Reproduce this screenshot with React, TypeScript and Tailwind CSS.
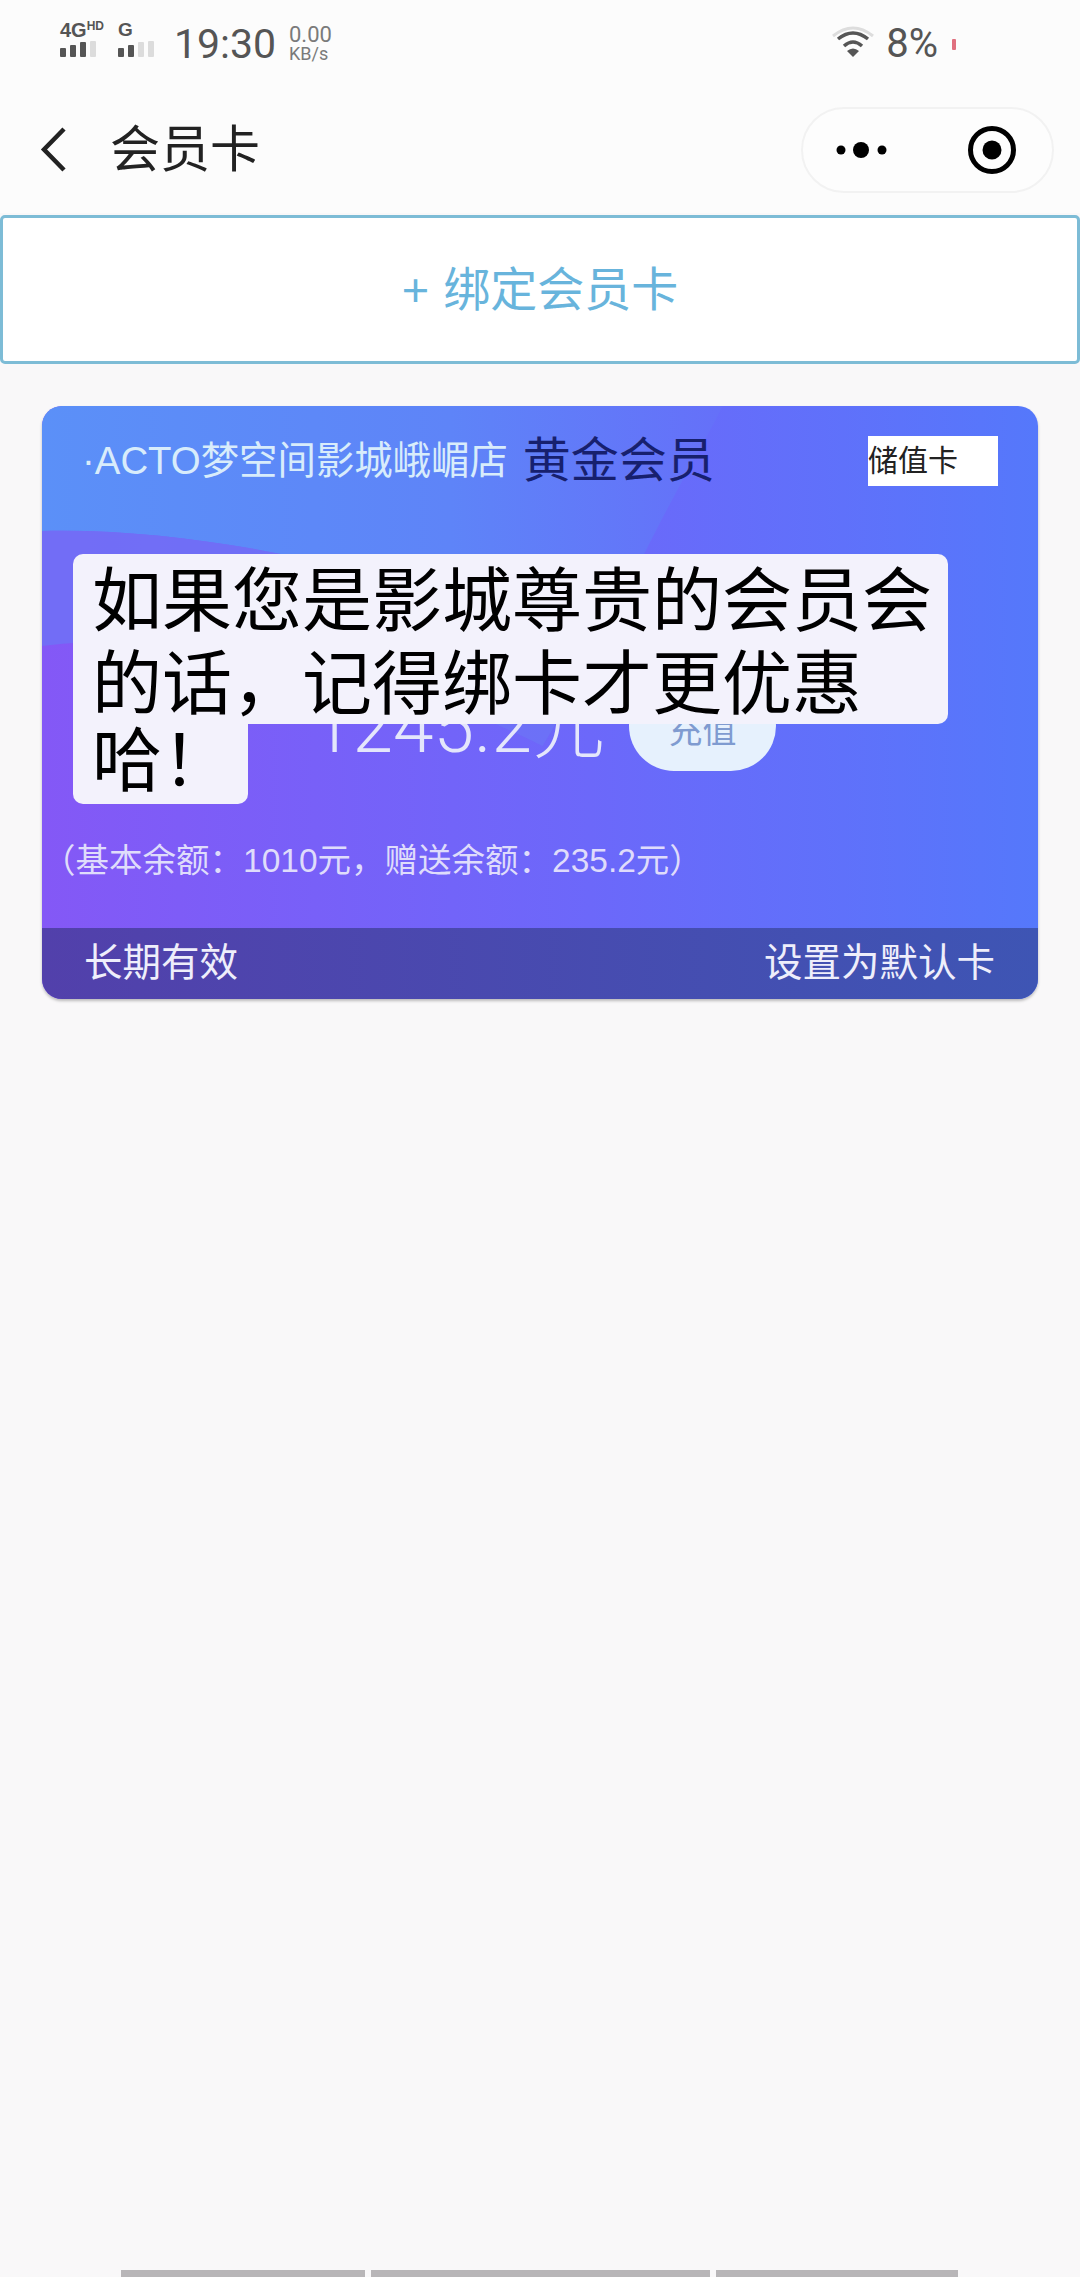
import React from "react";

const cjk = "font-['Liberation_Sans','Noto_Sans_CJK_SC',sans-serif]";

function Signal({ on }: { on: number }) {
  return (
    <div className="flex items-end gap-[4px] h-[16px]">
      {[9, 12, 15, 16].map((h, i) => (
        <div
          key={h}
          className={i < on ? "w-[6px] rounded-[1px] bg-[#555555]" : "w-[6px] rounded-[1px] bg-[#dcdcdc]"}
          style={{ height: h }}
        />
      ))}
    </div>
  );
}

function StatusBar() {
  return (
    <div className="h-[88px] pl-[60px] pr-[124px] flex items-center justify-between text-[#555555]">
      <div className="flex items-center">
        <div className="flex flex-col w-[58px] mt-[-12px]">
          <div className="flex items-start h-[22px] font-['Liberation_Sans',sans-serif] font-bold leading-none">
            <span className="text-[20px] leading-[22px]">4G</span>
            <span className="text-[12px] leading-[14px]">HD</span>
          </div>
          <Signal on={3} />
        </div>
        <div className="flex flex-col w-[56px] mt-[-12px]">
          <div className="h-[22px] font-['Liberation_Sans',sans-serif] font-bold text-[19px] leading-[22px]">G</div>
          <Signal on={2} />
        </div>
        <span className="font-['Roboto',sans-serif] text-[41px] leading-none w-[115px]">19:30</span>
        <div className="flex flex-col items-start font-['Roboto',sans-serif] text-[#7a7a7a] mt-[-2px]">
          <span className="text-[22px] leading-[21px]">0.00</span>
          <span className="text-[18px] leading-[17px]">KB/s</span>
        </div>
      </div>
      <div className="flex items-center">
        <svg width="44" height="36" viewBox="0 0 44 36" fill="none" className="mr-[11px]">
          <path d="M2 10 Q22 -6 42 10" stroke="#dddddd" strokeWidth="3" />
          <path d="M7 13 Q22 1 37 13" stroke="#555555" strokeWidth="3.5" />
          <path d="M13 20 Q22 12 31 20" stroke="#555555" strokeWidth="3.5" />
          <path d="M16 25 Q22 20 28 25 L22 31 Z" fill="#555555" />
        </svg>
        <span className="font-['Roboto',sans-serif] text-[40px] leading-none">8%</span>
        <span className="ml-[14px] w-[4px] h-[11px] bg-[#e0707f] rounded-[1px]" />
      </div>
    </div>
  );
}

function NavBar() {
  return (
    <div className="h-[125px] flex items-center pb-[2px]">
      <svg width="34" height="50" viewBox="0 0 34 50" fill="none" className="ml-[38px]">
        <path d="M26 4 L6 24.5 L26 45" stroke="#222222" strokeWidth="4.5" />
      </svg>
      <span className={`${cjk} text-[#222222] text-[50px] leading-none ml-[38px]`}>会员卡</span>
      <div className="ml-auto mr-[26px] w-[253px] h-[86px] rounded-full bg-[#fdfdfd] border-2 border-[#f2f2f2] flex items-center justify-between pl-[32px] pr-[35px]">
        <svg width="54" height="20" viewBox="0 0 54 20">
          <circle cx="6" cy="10" r="4.5" fill="#000000" />
          <circle cx="26" cy="10" r="8" fill="#000000" />
          <circle cx="47" cy="10" r="4.5" fill="#000000" />
        </svg>
        <svg width="50" height="50" viewBox="0 0 50 50" fill="none">
          <circle cx="25" cy="25" r="21.5" stroke="#000000" strokeWidth="5" />
          <circle cx="25" cy="25" r="9.5" fill="#000000" />
        </svg>
      </div>
    </div>
  );
}

function Card() {
  return (
    <div className="relative mx-[42px] mt-[42px] h-[593px] rounded-[20px] overflow-hidden flex flex-col shadow-[0_2px_3px_rgba(0,0,0,0.25)] bg-[linear-gradient(90deg,#8458f6_0%,#6c68fa_55%,#5578fb_100%)]">
      <svg className="absolute left-0 top-0 w-full h-[400px]" viewBox="0 0 995 400" preserveAspectRatio="none">
        <defs>
          <linearGradient id="blueBand" x1="0" y1="0" x2="1" y2="0">
            <stop offset="0" stopColor="#5b90f8" />
            <stop offset="0.6" stopColor="#5e84f8" />
            <stop offset="1" stopColor="#6570f9" />
          </linearGradient>
        </defs>
        <path d="M0 0 H680 C650 60 610 120 560 240 C420 190 200 120 0 125 Z" fill="url(#blueBand)" />
        <path d="M0 125 C200 120 420 190 560 240 L500 340 C340 260 160 220 0 240 Z" fill="#6c74f6" opacity="0.75" />
      </svg>
      <div className="relative h-[110px] flex items-center">
        <span className={`${cjk} text-[#d8ecfb] text-[38.4px] leading-none ml-[40px] whitespace-nowrap`}>·ACTO梦空间影城峨嵋店</span>
        <span className={`${cjk} text-[#17206e] text-[48px] leading-none ml-[15px] whitespace-nowrap`}>黄金会员</span>
        <span className={`${cjk} ml-auto mr-[40px] w-[130px] h-[50px] bg-white text-[#222222] text-[30px] leading-[50px]`}>储值卡</span>
      </div>
      <div className="relative h-[281px] flex items-end pl-[270px] pb-[33px]">
        <span className="font-['Roboto','Noto_Sans_CJK_SC',sans-serif] text-[#e4e6fb] text-[73px] font-light leading-none whitespace-nowrap">1245.2元</span>
        <span className={`${cjk} ml-[24px] mb-[-7px] w-[147px] h-[90px] rounded-[45px] bg-[#e6f1fd] text-[#7f9bd0] text-[34px] flex items-center justify-center pt-[10px]`}>充值</span>
      </div>
      <div className={`${cjk} relative flex-1 text-[#dfdcfb] text-[33.5px] leading-none pt-[47px] whitespace-nowrap`}>（基本余额：1010元，赠送余额：235.2元）</div>
      <div className={`${cjk} relative h-[71px] shrink-0 bg-[linear-gradient(90deg,#5240ab,#3e55b4)] flex items-center justify-between pl-[42px] pr-[43px] text-[#eeeefb] text-[38.5px] leading-none`}>
        <span>长期有效</span>
        <span>设置为默认卡</span>
      </div>
      <div className={`${cjk} absolute left-[31px] top-[148px] text-black text-[70px] leading-[83px] whitespace-nowrap`}>
        <div className="w-[875px] h-[170px] rounded-[10px] bg-[#f3f2fc] pl-[19px] pt-[7px]">
          如果您是影城尊贵的会员会
          <br />
          的话，记得绑卡才更优惠
        </div>
        <div className="w-[175px] h-[90px] mt-[-10px] rounded-b-[10px] bg-[#f3f2fc] pl-[19px] pt-[7px] leading-[83px]">哈！</div>
      </div>
    </div>
  );
}

export default function App() {
  return (
    <div className="w-[1080px] h-[2277px] bg-[#f9f8f9] flex flex-col overflow-hidden">
      <div className="bg-[#fcfcfc]">
        <StatusBar />
        <NavBar />
      </div>
      <button
        className={`${cjk} mt-[2px] h-[149px] w-full bg-white border-[3px] border-[#7dbcd6] rounded-[5px] text-[#68b4dc] text-[47px] leading-none flex items-center justify-center`}
      >
        <span className="mr-[14px]">+</span>绑定会员卡
      </button>
      <Card />
      <div className="mt-auto flex h-[7px] pl-[121px] pr-[122px] gap-[6px]">
        <div className="w-[244px] bg-[#b8b6b8]" />
        <div className="w-[339px] bg-[#b8b6b8]" />
        <div className="w-[242px] bg-[#b8b6b8]" />
      </div>
    </div>
  );
}
